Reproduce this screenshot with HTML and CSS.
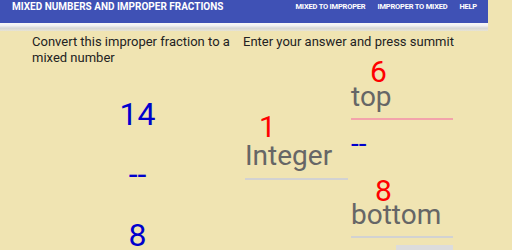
FILE: index.html
```html
<!DOCTYPE html>
<html>
<head>
<meta charset="utf-8">
<link rel="stylesheet" href="styles.css">
</head>
<body>
<header class="appbar">
  <div class="title">MIXED NUMBERS AND IMPROPER FRACTIONS</div>
  <nav class="nav">
    <span>MIXED TO IMPROPER</span>
    <span>IMPROPER TO MIXED</span>
    <span>HELP</span>
  </nav>
</header>
<div class="shadow"></div>
<main class="main">
  <section class="left">
    <p class="prompt">Convert this improper fraction to a mixed number</p>
    <div class="big first">14</div>
    <div class="big bar">--</div>
    <div class="big bar2">8</div>
  </section>
  <section class="right">
    <p class="prompt">Enter your answer and press summit</p>
    <div class="answer">
      <div class="integer">
        <div class="val int-val">1</div>
        <div class="ph">Integer</div>
        <div class="line grey"></div>
      </div>
      <div class="fraction">
        <div class="val top-val">6</div>
        <div class="ph">top</div>
        <div class="line pink"></div>
        <div class="dash">--</div>
        <div class="val bottom-val">8</div>
        <div class="ph">bottom</div>
        <div class="line grey"></div>
        <div class="btn"></div>
      </div>
    </div>
  </section>
</main>
</body>
</html>
```
FILE: styles.css
```css
html, body {
  margin: 0;
  padding: 0;
}
body {
  background: #f0e4b2;
  font-family: Roboto, "Liberation Sans", sans-serif;
  width: 512px;
  height: 250px;
  overflow: hidden;
}
.appbar {
  width: 488px;
  height: 23px;
  background: #3f51b5;
  color: #fff;
  display: flex;
  align-items: flex-start;
  box-sizing: border-box;
  padding: 1px 11px 0 12px;
  font-weight: 700;
}
.title {
  font-size: 10px;
  line-height: 12px;
}
.nav {
  margin-left: auto;
  display: flex;
  gap: 12px;
  font-size: 7.5px;
  line-height: 12px;
  letter-spacing: -0.2px;
}
.shadow {
  width: 488px;
  height: 8px;
  background: linear-gradient(#f8f8f8 0%, #f2f2f2 30%, #d6d6d6 65%, #e8e4d4 100%);
}
.main {
  display: flex;
  padding-top: 3px;
  height: 216px;
  overflow: hidden;
}
.prompt {
  margin: 0;
  font-size: 13px;
  line-height: 16px;
  color: #222;
}
.left {
  width: 243px;
  box-sizing: border-box;
  padding-left: 32px;
  padding-right: 8px;
}
.big {
  width: 211px;
  text-align: center;
  font-size: 32px;
  line-height: 32px;
  color: #0000cd;
}
.big.first { margin-top: 32px; }
.big.bar { margin-top: 28px; }
.big.bar2 { margin-top: 29px; }
.right {
  flex: 1;
}
.answer {
  display: flex;
  align-items: flex-start;
  padding-left: 2px;
}
.integer {
  width: 103px;
  margin-top: 66px;
}
.fraction {
  width: 102px;
  margin-left: 3px;
  display: flex;
  flex-direction: column;
}
.val {
  color: #ff0000;
  font-size: 30px;
  line-height: 22px;
}
.int-val { padding-left: 14px; }
.top-val { padding-left: 19px; margin-top: 11px; }
.bottom-val { padding-left: 24px; margin-top: 23px; line-height: 20px; }
.ph {
  color: #666;
  font-size: 28px;
  line-height: 28px;
}
.integer .ph { margin-top: 4px; }
.line {
  height: 2px;
  margin-top: 7px;
}
.integer .line { margin-top: 8px; }
.line.grey { background: #d2d2d2; }
.line.pink { background: #f3a3ab; }
.dash {
  color: #0000cd;
  font-size: 28px;
  line-height: 28px;
  margin-top: 10px;
}
.btn {
  align-self: flex-end;
  width: 57px;
  height: 20px;
  margin-top: 7px;
  background: #dcdcdc;
}
```
